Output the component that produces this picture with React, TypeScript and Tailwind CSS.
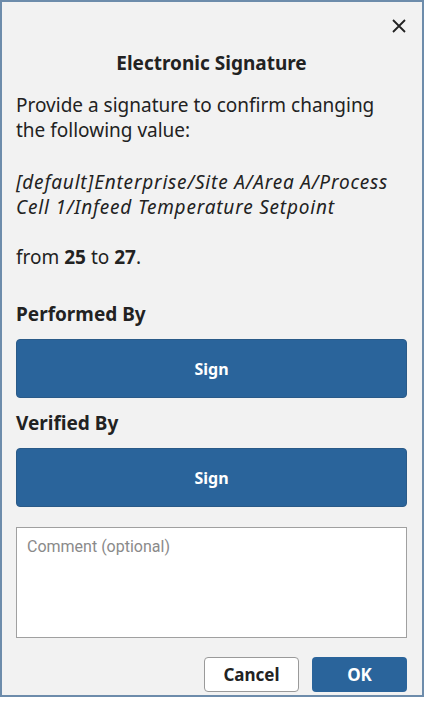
import * as React from "react";

const SignButton: React.FC = () => (
  <button
    type="button"
    className="h-[59px] w-full rounded-[4px] border border-[#2a5a88] bg-[#2a649b] text-[16px] font-bold text-white"
  >
    Sign
  </button>
);

const App: React.FC = () => {
  return (
    <div className="h-[701px] w-[426px] bg-white font-['Noto_Sans',sans-serif] text-[#222]">
      <div className="flex h-[697px] w-[424px] flex-col border-2 border-[#6d8cab] bg-[#f2f2f2] pl-[14px] pr-[15px]">
        {/* Close */}
        <div className="flex justify-end pt-[17px]">
          <svg width="14" height="14" viewBox="0 0 14 14" className="mr-[1px]">
            <path d="M1 1L13 13M13 1L1 13" stroke="#222" strokeWidth="1.8" />
          </svg>
        </div>

        <h1 className="mt-[18px] text-center text-[19px] leading-[24px] font-bold">
          Electronic Signature
        </h1>

        <p className="mt-[18px] text-[19px] leading-[25px]">
          Provide a signature to confirm changing the following value:
        </p>

        <p className="mt-[27px] text-[19px] leading-[25px] italic tracking-[0.8px]">
          [default]Enterprise/Site A/Area A/Process Cell 1/Infeed Temperature
          Setpoint
        </p>

        <p className="mt-[25px] text-[19px] leading-[25px]">
          from <b>25</b> to <b>27</b>.
        </p>

        {/* Performed By */}
        <h2 className="mt-[32px] text-[19px] leading-[25px] font-bold">
          Performed By
        </h2>
        <div className="mt-[12px]">
          <SignButton />
        </div>

        {/* Verified By */}
        <h2 className="mt-[13px] text-[19px] leading-[25px] font-bold">
          Verified By
        </h2>
        <div className="mt-[12px]">
          <SignButton />
        </div>

        {/* Comment */}
        <textarea
          placeholder="Comment (optional)"
          className="mt-[20px] h-[111px] w-full resize-none border border-[#a0a0a0] bg-white px-[10px] py-[8px] font-['Roboto',sans-serif] text-[16px] leading-[22px] placeholder:text-[#8a8a8a] outline-none"
        />

        {/* Footer */}
        <div className="mt-[19px] flex justify-end gap-[13px]">
          <button
            type="button"
            className="h-[35px] w-[95px] rounded-[4px] border border-[#9a9a9a] bg-white text-[17px] font-bold text-[#222]"
          >
            Cancel
          </button>
          <button
            type="button"
            className="h-[35px] w-[95px] rounded-[4px] bg-[#2a649b] text-[17px] font-bold text-white"
          >
            OK
          </button>
        </div>
      </div>
    </div>
  );
};

export default App;
